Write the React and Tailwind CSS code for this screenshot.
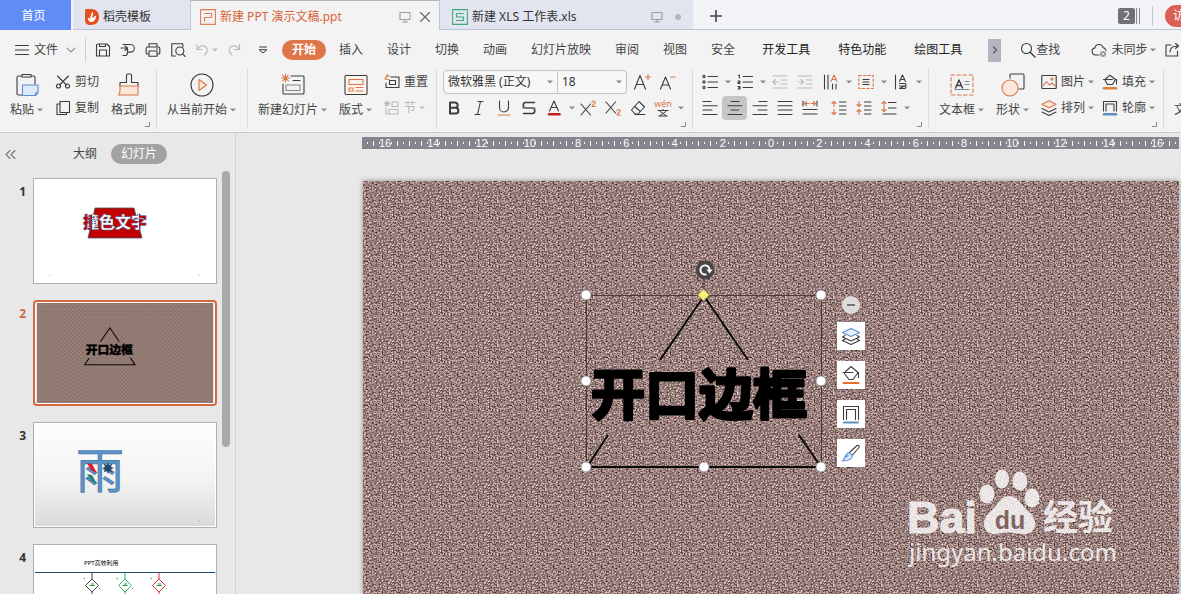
import React, { useState } from "react";
import clsx from "clsx";

const INK = "#3c3c3c";
const ORANGE = "#d9774a";
const BLUE = "#5b8fd6";
const FAINT = "#b9b9b9";

const MENU_TABS = ["插入", "设计", "切换", "动画", "幻灯片放映", "审阅", "视图", "安全"];
const TOOL_TABS = ["开发工具", "特色功能", "绘图工具"];

const TICK_COUNT = 135;

function Icon({ size = 16, color = INK, children }) {
  return (
    <svg
      width={size}
      height={size}
      viewBox={`0 0 ${size} ${size}`}
      fill="none"
      stroke={color}
      strokeWidth="1.1"
      strokeLinecap="round"
      strokeLinejoin="round"
      className="shrink-0"
      aria-hidden="true"
    >
      {children}
    </svg>
  );
}

function Caret({ faint }) {
  return (
    <svg width="6" height="4" viewBox="0 0 6 4" className="ml-[3px] shrink-0" aria-hidden="true">
      <path d="M0 0.5h6L3 3.6z" fill={faint ? "#c0c0c0" : "#8a8a8a"} />
    </svg>
  );
}

/* ---------- ribbon building blocks ---------- */

function Group({ launcher, className, children }) {
  return (
    <section className={clsx("relative flex h-[61px] shrink-0 border-r border-[#dcdcdc] pt-px", className)}>
      {children}
      {launcher && (
        <button type="button" aria-label="更多设置" className="absolute right-1.5 bottom-0.5">
          <svg width="5" height="5" viewBox="0 0 5 5" fill="none" stroke="#8a8a8a">
            <path d="M4.5 0v4.500h-4.500" />
          </svg>
        </button>
      )}
    </section>
  );
}

function BigButton({ label, caret, children }) {
  return (
    <button type="button" className="flex h-[52px] shrink-0 flex-col items-center">
      <span className="flex h-8 items-center">{children}</span>
      <span className="flex h-[18px] items-center leading-[18px] whitespace-nowrap">
        {label}
        {caret && <Caret />}
      </span>
    </button>
  );
}

function RowButton({ label, caret, disabled, children }) {
  return (
    <button
      type="button"
      disabled={disabled}
      className={clsx("flex h-[26px] items-center gap-1 whitespace-nowrap", disabled && "text-[#b5b5b5]")}
    >
      {children}
      <span className="flex items-center">
        {label}
        {caret && <Caret faint={disabled} />}
      </span>
    </button>
  );
}

function Tool({ label, caret, active, children }) {
  return (
    <button type="button" aria-label={label} className="flex h-[26px] shrink-0 items-center">
      <span className={clsx("flex h-6 w-[25px] items-center justify-center rounded", active && "bg-[#c6c6c6]")}>
        {children}
      </span>
      {caret && (
        <span className="flex w-[9px]">
          <Caret />
        </span>
      )}
    </button>
  );
}

function Picker({ id, label, value, className }) {
  return (
    <div className={clsx("relative h-6 border border-[#c4c4c4] bg-[#f7f7f7]", className)}>
      <label htmlFor={id} className="sr-only">{label}</label>
      <select id={id} className="h-full w-full appearance-none bg-transparent pl-1 text-xs text-[#333]">
        <option>{value}</option>
      </select>
      <span className="pointer-events-none absolute top-[9px] right-1">
        <Caret />
      </span>
    </div>
  );
}

/* ---------- top bars ---------- */

function Monitor() {
  return (
    <Icon size={12} color="#9b9b9b">
      <path d="M1 1.5h10v7H1zM6 8.500v2.500M3.500 11h5" />
    </Icon>
  );
}

function TabBar() {
  return (
    <header className="flex h-[30px] shrink-0 bg-[#f2f3f7]">
      <button type="button" className="mr-0.5 w-[71px] shrink-0 bg-[#608cf8] pt-0.5 pr-1 text-white">首页</button>
      <button
        type="button"
        className="flex w-[117px] shrink-0 items-center gap-1 border-b border-[#bcc6da] bg-[#e2e5ef] pt-1 pl-3 text-[#333]"
      >
        <svg width="14" height="16" viewBox="0 0 14 16" aria-hidden="true">
          <path d="M1 0h5c5 0 8 3 8 8s-3 8-8 8H5c-3 0-5-2-5-5V1z" fill="#e5501f" />
          <path d="M7.500 2.500c1.500 2.500 0 4-.5 6.500 1.500-.5 2.500-2 4-2.200C11 10 9.500 13 6.500 13S2.800 10.500 3 8.500c1 .2 1.500 1 2 1.800C5 7.500 6.500 5 7.500 2.500z" fill="#fff" />
        </svg>
        稻壳模板
      </button>
      <div className="flex w-[250px] shrink-0 items-center border-x border-t border-x-[#bcc6da] border-t-[#b5b5b9] bg-[#f3f3f3] pt-0.5 pr-2 pl-[9px]">
        <button type="button" className="flex flex-1 items-center gap-1 whitespace-nowrap text-[#d9643a]">
          <Icon color="#e07b52">
            <path d="M.6.6h14.800v14.800H.6zM4.500 4.500h7v4h-7v3.500" />
          </Icon>
          新建 PPT 演示文稿.ppt
        </button>
        <Monitor />
        <button type="button" aria-label="关闭" className="ml-2">
          <Icon size={12} color="#666">
            <path d="M1.500 1.500l9 9M10.500 1.500l-9 9" />
          </Icon>
        </button>
      </div>
      <div className="flex w-[253px] shrink-0 items-center border-b border-[#bcc6da] bg-[#e2e5ef] px-3 pt-1">
        <button type="button" className="flex flex-1 items-center gap-1 whitespace-nowrap text-[#333]">
          <Icon color="#3fab7c">
            <path d="M.6.6h14.800v14.800H.6zM11.500 4.500h-7v3.500h7v3.500h-7" />
          </Icon>
          新建 XLS 工作表.xls
        </button>
        <Monitor />
        <span className="ml-3 size-1.5 rounded-full bg-[#b3b5bd]" />
      </div>
      <div className="flex flex-1 items-center justify-between overflow-hidden border-b border-[#bcc6da] pt-0.5 pl-4">
        <button type="button" aria-label="新建标签">
          <svg width="14" height="14" viewBox="0 0 14 14" stroke="#444" strokeWidth="1.6">
            <path d="M7 1v12M1 7h12" />
          </svg>
        </button>
        <div className="flex shrink-0 items-center">
          <span className="flex h-4 w-[17px] items-center justify-center rounded-xs bg-[#707174] text-white">2</span>
          <span className="mr-3 ml-px h-4 w-1 border-x border-[#88898c]" />
          <span className="mr-3 h-5 w-px bg-[#c5c8d0]" />
          <button type="button" className="-mr-1 h-[22px] w-5 overflow-hidden rounded-l-full bg-[#dc5f55] pl-2 whitespace-nowrap text-white">
            访客
          </button>
        </div>
      </div>
    </header>
  );
}

function QuickButton({ label, caret, children }) {
  return (
    <button type="button" aria-label={label} className="flex h-6 items-center pl-[9px]">
      {children}
      {caret && <Caret faint />}
    </button>
  );
}

function MenuBar() {
  return (
    <nav className="flex h-[38px] shrink-0 items-center overflow-hidden bg-[#f3f3f3] pt-0.5 pr-px pl-3.5">
      <button type="button" className="flex w-[62px] shrink-0 items-center whitespace-nowrap">
        <Icon>
          <path d="M1.500 3.500h13M1.500 8h13M1.500 12.500h13" />
        </Icon>
        <span className="mr-2 ml-1">文件</span>
        <Icon size={10} color="#999">
          <path d="M1 3l4 4 4-4" />
        </Icon>
      </button>
      <span className="ml-[9px] h-6 w-px shrink-0 bg-[#cfcfcf]" />

      <div className="flex w-[196px] shrink-0 items-center">
        <QuickButton label="保存">
          <Icon>
            <path d="M1.500 3.500c0-1 .5-1.500 1.500-1.500h9l2.500 2.500V14h-13zM4.500 14V8h7v6M4.500 2v2.500h6V2" />
          </Icon>
        </QuickButton>
        <QuickButton label="输出为PDF">
          <Icon>
            <path d="M3 2.500h7.500a3.800 3.800 0 010 7.600H7.500V6M1 6h6.500M5 3.800L7.500 6 5 8.500M3 13.500h2.500c1.500 0 2-1 2-3.400" />
          </Icon>
        </QuickButton>
        <QuickButton label="打印">
          <Icon>
            <path d="M4 5V1.800h8V5M4 12H2.200C1.500 12 1.200 11.500 1.200 11V6.500C1.200 5.500 1.800 5 2.500 5h11c.8 0 1.300.5 1.300 1.500V11c0 .6-.4 1-1 1H12M4 9h8v5.200H4zM11.500 7h1" />
          </Icon>
        </QuickButton>
        <QuickButton label="打印预览">
          <Icon>
            <path d="M5.500 14H1.800V1.800h11V5M13 12.200l2.200 2.300" />
            <circle cx="9.800" cy="9" r="4" />
          </Icon>
        </QuickButton>
        <QuickButton label="撤销" caret>
          <Icon color={FAINT} size={14}>
            <path d="M2 1.500v5h5M2 6.500C4 3.500 6.500 2.500 9 3c4 1 4.500 6 .5 9" />
          </Icon>
        </QuickButton>
        <QuickButton label="恢复">
          <Icon color={FAINT} size={14}>
            <path d="M12.500 1.500v5h-5M12.500 6.500C10.500 3.500 8 2.500 5.500 3c-4 1-4.500 6-.5 9" />
          </Icon>
        </QuickButton>
        <span className="pl-2">
          <QuickButton label="自定义快速访问工具栏">
            <Icon size={10}>
              <path d="M1.500 2h7M1.500 5L5 8l3.500-3z" strokeWidth="1" />
            </Icon>
          </QuickButton>
        </span>
      </div>

      <button type="button" className="h-5 w-11 shrink-0 rounded-full bg-[#e0744a] font-bold text-white">开始</button>
      <div className="flex shrink-0 pl-px">
        {MENU_TABS.map((t) => (
          <button key={t} type="button" className="px-3 whitespace-nowrap">{t}</button>
        ))}
      </div>
      <div className="flex shrink-0 pl-px">
        {TOOL_TABS.map((t) => (
          <button key={t} type="button" className="px-3.5 whitespace-nowrap text-[#222]">{t}</button>
        ))}
      </div>
      <div className="flex flex-1 items-center justify-between pl-3">
        <button type="button" aria-label="更多选项卡" className="flex h-[23px] w-[13px] items-center justify-center bg-[#b3b5bf]">
          <Icon size={8} color="#555">
            <path d="M2.500 1l3 3-3 3" />
          </Icon>
        </button>
        <span className="w-1" />
        <button type="button" className="flex items-center whitespace-nowrap">
          <Icon>
            <circle cx="6.500" cy="6.500" r="5" />
            <path d="M10.200 10.200l4.800 4.800" strokeWidth="1.400" />
          </Icon>
          查找
        </button>
        <span className="w-4" />
        <button type="button" className="flex items-center gap-1 whitespace-nowrap">
          <Icon>
            <path d="M8 13H4.500a3.600 3.600 0 01-.6-7.100 4.200 4.200 0 018.200-.3A3.500 3.500 0 0115 8.500" />
            <circle cx="12" cy="12" r="3" fill="#999" stroke="none" />
            <path d="M11 11l2 2M13 11l-2 2" stroke="#fff" strokeWidth=".7" />
          </Icon>
          <span className="flex items-center">未同步<Caret /></span>
        </button>
        <button type="button" aria-label="分享">
          <Icon>
            <path d="M7 3H2v11h11.500V9M6 10c0-4 2.500-6 8-6M11.500 1.500L14.500 4l-3 2.500" />
          </Icon>
        </button>
      </div>
    </nav>
  );
}

/* ---------- ribbon ---------- */

function ClipboardGroup() {
  return (
    <Group launcher className="w-[157px] gap-3 px-2.5">
      <BigButton label="粘贴" caret>
        <Icon size={24}>
          <path d="M7 3H3.500C2.500 3 2 3.500 2 4.500v16c0 1 .5 1.500 1.500 1.500H7M16 3h2.500c1 0 1.500.5 1.500 1.500V11M7 1.500h9V4H7z" />
          <path d="M7.500 12h15.500v8l-2.500 2.500h-13zM23 20h-2.500v2.500" fill="#ddeafb" stroke={BLUE} />
        </Icon>
      </BigButton>
      <div>
        <RowButton label="剪切">
          <Icon>
            <path d="M2.500 2l9 9M13.500 2l-9 9" />
            <circle cx="3.500" cy="12" r="2" />
            <circle cx="12.500" cy="12" r="2" />
          </Icon>
        </RowButton>
        <RowButton label="复制">
          <Icon>
            <path d="M5 1.500h9.500v11H5zM5 4H2v10.500h9.500v-2" />
          </Icon>
        </RowButton>
      </div>
      <BigButton label="格式刷">
        <Icon size={24}>
          <path d="M3 13V9.500h6.500V2.500c0-1 .5-1.500 1.500-1.500h2c1 0 1.500.5 1.500 1.500v7H21V13" />
          <path d="M3 13h18v9H1.500C3 20.500 3 19 3 17z" fill="#fbe6da" stroke={ORANGE} />
        </Icon>
      </BigButton>
    </Group>
  );
}

function SlideGroup() {
  return (
    <>
      <Group className="w-[91px] px-2.5">
        <BigButton label="从当前开始" caret>
          <Icon size={24}>
            <circle cx="12" cy="12" r="11" />
            <path d="M9 6.500v11l7.500-5.500z" fill="#fbe6da" stroke={ORANGE} />
          </Icon>
        </BigButton>
      </Group>
      <Group className="w-[189px] gap-3 px-2.5">
        <BigButton label="新建幻灯片" caret>
          <Icon size={24}>
            <path d="M10 3h12c.6 0 1 .4 1 1v16c0 .6-.4 1-1 1H3c-.6 0-1-.4-1-1v-9M12 7.500h7" />
            <path d="M5 12h14v5.500H5z" stroke="#888" />
            <path d="M4.500 1v8M.5 5h8M1.700 2.200l5.600 5.600M7.300 2.200L1.700 7.800" stroke={ORANGE} />
          </Icon>
        </BigButton>
        <BigButton label="版式" caret>
          <Icon size={24}>
            <rect x="1" y="2.500" width="22" height="19" rx="1" fill="#fdf3ec" />
            <path d="M5 6.500h14v5H5zM5 15h4v3H5zM12 14.500h7M12 18h7" stroke={ORANGE} />
          </Icon>
        </BigButton>
        <div>
          <RowButton label="重置">
            <Icon>
              <path d="M7 3h8v10.500H2V9M5.500 6.500h6v4h-6z" />
              <path d="M1 5c.5-2 2-3 4.500-3M3.500.500L1 5l4.200.5" stroke={ORANGE} />
            </Icon>
          </RowButton>
          <RowButton label="节" caret disabled>
            <Icon color={FAINT}>
              <path d="M8 2h6v4.500H8zM5 9.500h9V14H5zM2 8v6h2M3 1v5M.5 3.500h5M1.200 1.700l3.600 3.600M4.800 1.700L1.200 5.300" />
            </Icon>
          </RowButton>
        </div>
      </Group>
    </>
  );
}

function FontGroup() {
  return (
    <Group launcher className="w-64 flex-col px-1">
      <div className="flex h-[26px] items-center pl-0.5">
        <Picker id="font-name" label="字体" value="微软雅黑 (正文)" className="w-[115px] rounded-l" />
        <Picker id="font-size" label="字号" value="18" className="w-[69px] rounded-r border-l-0" />
        <div className="flex pl-0.5">
          <Tool label="增大字号">
            <Icon size={18}>
              <path d="M1.500 16L7 2.500 12.500 16M3.500 11.500h7" />
              <path d="M12.500 4h5M15 1.500v5" stroke={ORANGE} />
            </Icon>
          </Tool>
          <Tool label="减小字号">
            <Icon size={18}>
              <path d="M2.500 16L7.500 4l5 12M4.200 12h6.600" />
              <path d="M12.500 4H17" stroke={ORANGE} />
            </Icon>
          </Tool>
        </div>
      </div>
      <div className="flex">
        <Tool label="加粗">
          <Icon>
            <path d="M4 2.500h5a2.600 2.600 0 010 5.300H4zM4 7.800h5.500a2.800 2.800 0 010 5.700H4z" strokeWidth="2" />
          </Icon>
        </Tool>
        <Tool label="倾斜">
          <Icon>
            <path d="M7 1.500h5M4 14.500h5M9.500 1.500l-3 13" />
          </Icon>
        </Tool>
        <Tool label="下划线">
          <Icon>
            <path d="M3.500 1v6.500a4.500 4.500 0 009 0V1" />
            <path d="M2 15h12" stroke={ORANGE} />
          </Icon>
        </Tool>
        <Tool label="删除线">
          <Icon>
            <path d="M13.500 2.500h-9c-3 0-3 5.500 0 5.500h7c3 0 3 5.500 0 5.500h-9" strokeWidth="1.600" />
            <path d="M1.500 8h13" stroke="#888" />
          </Icon>
        </Tool>
        <Tool label="字体颜色" caret>
          <Icon>
            <path d="M3.500 11L8 1l4.500 10M5 7.500h6" />
            <path d="M3 14.200h10.500" stroke="#c81e1e" strokeWidth="2.600" />
          </Icon>
        </Tool>
        <Tool label="上标">
          <Icon>
            <path d="M1 4l9.500 11M10.500 4L1 15" />
            <path d="M12 2.500c0-2 3.200-2 3.200 0 0 1.500-3.200 2-3.200 4h3.400" stroke={ORANGE} />
          </Icon>
        </Tool>
        <Tool label="下标">
          <Icon>
            <path d="M1 2l9.500 11M10.500 2L1 13" />
            <path d="M12 11c0-2 3.200-2 3.200 0 0 1.500-3.200 2-3.200 4h3.400" stroke={ORANGE} />
          </Icon>
        </Tool>
        <Tool label="清除格式">
          <Icon>
            <path d="M9 1.500l5.500 5.500L8 14H5L1.500 10zM4.800 6.500l5.500 5M5 14.500h10" />
          </Icon>
        </Tool>
        <Tool label="拼音指南" caret>
          <svg width="18" height="18" viewBox="0 0 18 18" aria-hidden="true">
            <text x="9" y="8" textAnchor="middle" fontSize="9" fill="#d9774a">wén</text>
            <path d="M3.500 11.500h11M9 10v1.500M5.500 12l7 5M12.500 12l-7 5M4.500 17h9" stroke={INK} fill="none" />
          </svg>
        </Tool>
      </div>
    </Group>
  );
}

function ParagraphGroup() {
  return (
    <Group launcher className="w-[236px] flex-col px-1">
      <div className="flex gap-px">
        <Tool label="项目符号" caret>
          <Icon>
            <path d="M6 2.500h9.500M6 8h9.500M6 13.500h9.500" />
            <circle cx="2" cy="2.500" r="1.100" />
            <circle cx="2" cy="8" r="1.100" />
            <circle cx="2" cy="13.500" r="1.100" />
          </Icon>
        </Tool>
        <Tool label="编号" caret>
          <Icon>
            <path d="M6 2.500h9.500M6 8h9.500M6 13.500h9.500M1.500 1.500l.8-.5v3M1 7h2v1.200H1v1.300h2M1 12.500h2v2.500H1M1.500 13.700H3" />
          </Icon>
        </Tool>
        <div className="flex">
          <Tool label="减少缩进">
            <Icon color={FAINT}>
              <path d="M1 2h14M9 6h6M9 10h6M1 14h14M1 8h5.500M3.500 5.500L1 8l2.500 2.500" />
            </Icon>
          </Tool>
          <Tool label="增加缩进">
            <Icon color={FAINT}>
              <path d="M1 2h14M9 6h6M9 10h6M1 14h14M1 8h5.500M4 5.500L6.500 8 4 10.500" />
            </Icon>
          </Tool>
        </div>
        <Tool label="文字方向" caret>
          <Icon>
            <path d="M1.500 1v14M5 1v14M9.500 10v5M13 10v5" />
            <path d="M8 7.500L11 1l3 6.500M9 5.500h4" stroke={ORANGE} />
          </Icon>
        </Tool>
        <Tool label="对齐文本" caret>
          <Icon>
            <rect x=".8" y="1.500" width="14.400" height="13" stroke={ORANGE} strokeDasharray="2.500 2" />
            <path d="M5 5.500h6M5 8h6M5 10.500h6" />
          </Icon>
        </Tool>
        <Tool label="旋转文字" caret>
          <Icon>
            <path d="M2.500 1v14M6.500 7.500L9.500 1l3 6.500M7.500 5.500h4M6.500 9.500h5c1 0 1.500.5 1.500 1.300s-.5 1.200-1.500 1.200h-5m5 0c1 0 1.500.5 1.500 1.300s-.5 1.200-1.500 1.200h-5z" />
          </Icon>
        </Tool>
      </div>
      <div className="flex gap-1">
        <div className="flex">
          <Tool label="左对齐">
            <Icon>
              <path d="M1 1.500h8M1 5.800h14M1 10h9M1 14.500h14" />
            </Icon>
          </Tool>
          <Tool label="居中对齐" active>
            <Icon>
              <path d="M4 1.500h8M1 5.800h14M4 10h8M1 14.500h14" />
            </Icon>
          </Tool>
          <Tool label="右对齐">
            <Icon>
              <path d="M7 1.500h8M1 5.800h14M6 10h9M1 14.500h14" />
            </Icon>
          </Tool>
          <Tool label="两端对齐">
            <Icon>
              <path d="M1 1.500h14M1 5.800h14M1 10h14M1 14.500h14" />
            </Icon>
          </Tool>
          <Tool label="分散对齐">
            <Icon>
              <path d="M1 1v5M15 1v5M1 9.500h14M1 14h14" />
              <path d="M3 3.500h4M9 3.500h4M4.500 1.500l-2 2 2 2M11.500 1.500l2 2-2 2" stroke={ORANGE} />
            </Icon>
          </Tool>
        </div>
        <div className="flex">
          <Tool label="增加段间距">
            <Icon>
              <path d="M8.500 2H15M8.500 6H15M8.500 10H15M8.500 14H15" />
              <path d="M3 6.500V1.500M1 3.500l2-2 2 2M3 9.500v5M1 12.500l2 2 2-2" stroke={ORANGE} />
            </Icon>
          </Tool>
          <Tool label="减少段间距">
            <Icon>
              <path d="M8.500 2H15M8.500 6H15M8.500 10H15M8.500 14H15" />
              <path d="M3 1.500v5M1 4.500l2 2 2-2M3 14.500v-5M1 11.500l2-2 2 2" stroke={ORANGE} />
            </Icon>
          </Tool>
          <Tool label="行距" caret>
            <Icon>
              <path d="M7.500 2.500H15M7.500 8H15M2 14h13" />
              <path d="M3 1.500v10M1 3.500l2-2 2 2M1 9.500l2 2 2-2" stroke={ORANGE} />
            </Icon>
          </Tool>
        </div>
      </div>
    </Group>
  );
}

function InsertGroup() {
  return (
    <Group launcher className="w-[235px] gap-3 px-2.5">
      <BigButton label="文本框" caret>
        <Icon size={24}>
          <rect x="1" y="2" width="22" height="20" stroke={ORANGE} strokeDasharray="3.500 2.500" />
          <path d="M5.500 15l3.500-8 3.500 8M6.800 12.500h4.500" strokeWidth="1.400" />
          <path d="M15 8.500h4M15 11.500h4M5 16.500h14" stroke="#7a8794" />
        </Icon>
      </BigButton>
      <BigButton label="形状" caret>
        <Icon size={24}>
          <path d="M9 5V2c0-.6.400-1 1-1h12c.6 0 1 .4 1 1v13c0 .6-.4 1-1 1h-4" />
          <circle cx="9" cy="15" r="8" fill="#fbe6da" stroke={ORANGE} />
        </Icon>
      </BigButton>
      <div className="flex gap-2">
        <div>
          <RowButton label="图片" caret>
            <Icon>
              <rect x=".8" y="1.500" width="14.400" height="13" rx=".5" />
              <path d="M2.500 11.500l3-4 3 3.500 2.500-2 3 3" stroke={ORANGE} />
              <circle cx="11" cy="5" r="1" stroke={ORANGE} />
            </Icon>
          </RowButton>
          <RowButton label="排列" caret>
            <Icon>
              <path d="M1 8.500L8 12l7-3.500M1 12l7 3.500 7-3.500" />
              <path d="M8 .800l7 3.500-7 3.500-7-3.500z" fill="#fbe6da" stroke={ORANGE} />
            </Icon>
          </RowButton>
        </div>
        <div>
          <RowButton label="填充" caret>
            <Icon>
              <path d="M1.500 5.500h9M3.500 5L8 1.200 13.500 5.500 10.500 10.500h-5L3 6M14.500 5.500v4.500" />
              <path d="M2 14.200h12" stroke="#e08238" strokeWidth="2.600" />
            </Icon>
          </RowButton>
          <RowButton label="轮廓" caret>
            <Icon>
              <path d="M1.500 11V1.500h13V11M4 11V4h8v7" />
              <path d="M2 14.200h12" stroke="#5f8fc0" strokeWidth="2.600" />
            </Icon>
          </RowButton>
        </div>
      </div>
    </Group>
  );
}

function Ribbon() {
  return (
    <div className="flex h-[65px] shrink-0 overflow-hidden border-b border-[#c9c9c9] bg-[#f3f3f3]">
      <ClipboardGroup />
      <SlideGroup />
      <FontGroup />
      <ParagraphGroup />
      <InsertGroup />
      <Group className="w-20 px-2.5">
        <BigButton label="文档助手" />
      </Group>
    </div>
  );
}

/* ---------- slide art ---------- */

function OpenTriangle() {
  return <path d="M45 66L89 2l44 64M-7 141l-21 32h234l-22-32" fill="none" stroke="#0a0a0a" />;
}

function ThumbOne() {
  return (
    <svg viewBox="0 0 180 102" className="h-full w-full bg-white">
      <defs>
        <linearGradient id="clash" x1="48" x2="113" y1="0" y2="0" gradientUnits="userSpaceOnUse">
          <stop offset=".14" stopColor="#c00000" />
          <stop offset=".14" stopColor="#fff" />
          <stop offset=".86" stopColor="#fff" />
          <stop offset=".86" stopColor="#c00000" />
        </linearGradient>
      </defs>
      <path d="M60 28h39l8 30H53z" fill="#c00000" stroke="#44546a" strokeWidth=".8" />
      <text x="80" y="48" textAnchor="middle" fontSize="16" fontWeight="900" fill="url(#clash)" stroke="#44649a" strokeWidth=".5">
        撞色文字
      </text>
      <circle cx="15" cy="95" r=".6" fill="#aaa" />
      <circle cx="164" cy="95" r=".6" fill="#888" />
    </svg>
  );
}

function ThumbTwo() {
  return (
    <svg viewBox="0 0 180 102" className="h-full w-full">
      <defs>
        <pattern id="weave" width="4" height="4" patternUnits="userSpaceOnUse">
          <rect width="4" height="4" fill="#957d76" />
          <path d="M0 0h2v1H0zM2 2h2v1H2z" fill="#836b65" />
          <path d="M0 2h1v1H0z" fill="#a48c86" />
        </pattern>
      </defs>
      <rect width="180" height="102" fill="url(#weave)" />
      <g transform="translate(55 25) scale(.22)" strokeWidth="5">
        <OpenTriangle />
      </g>
      <text x="74" y="52" textAnchor="middle" fontSize="12" fontWeight="900" stroke="#000" strokeWidth=".3">开口边框</text>
    </svg>
  );
}

function ThumbThree() {
  return (
    <svg viewBox="0 0 180 102" className="h-full w-full">
      <defs>
        <linearGradient id="fade" x1="0" x2="0" y1="0" y2="1">
          <stop offset=".1" stopColor="#fcfcfc" />
          <stop offset=".55" stopColor="#f3f3f3" />
          <stop offset="1" stopColor="#dadada" />
        </linearGradient>
      </defs>
      <rect width="180" height="102" fill="url(#fade)" />
      <text x="65" y="64" textAnchor="middle" fontSize="48" fill="#5b93c8" stroke="#41719c" strokeWidth=".6">雨</text>
      <path d="M52 39l5 1 5 9-6-3z" fill="#e01c2c" />
      <path d="M52 50l5 1 5 9-6-3z" fill="#2f8080" />
      <path d="M73 38l1.200 3 3-1.200L76 43l3 1-3 1.200 1.200 3-3-1.200L73 50l-1.200-3-3 1.200L70 45l-3-1 3-1-1.200-3.200 3 1.200z" fill="#24476e" />
      <circle cx="164" cy="97" r=".6" fill="#888" />
    </svg>
  );
}

function Pendant({ x, color }) {
  return (
    <g transform={`translate(${x} 27)`} fill="none" stroke={color}>
      <path d="M0 0v6M0 6l6.500 6.500L0 19l-6.500-6.500zM0 19v4" />
      <path d="M-2.500 12.500h5M-1 11h3" stroke="#2f9e44" />
      <path d="M-7 6l-1.500-1M7 15l1 1" stroke="#2f9e44" />
    </g>
  );
}

function ThumbFour() {
  return (
    <svg viewBox="0 0 180 102" className="h-full w-full bg-white">
      <text x="49" y="19" fontSize="6" fill="#000">PPT高效利用</text>
      <path d="M0 26.500h180" stroke="#1f4e79" />
      <Pendant x={57} color="#444" />
      <Pendant x={90} color="#2bb673" />
      <Pendant x={124} color="#e0313f" />
    </svg>
  );
}

const THUMBS = [ThumbOne, ThumbTwo, ThumbThree, ThumbFour];

function SlidePanel() {
  const [current, setCurrent] = useState(1);

  return (
    <aside className="flex w-[236px] shrink-0 flex-col border-r border-[#d3d3d3] bg-[#e8e8e8]">
      <div className="flex h-[38px] shrink-0 items-center pt-1 pl-1">
        <button type="button" aria-label="收起" className="mr-14">
          <Icon size={13} color="#777">
            <path d="M6 2.500L2 6.500l4 4M11 2.500l-4 4 4 4" />
          </Icon>
        </button>
        <button type="button">大纲</button>
        <button type="button" className="ml-3.5 h-5 w-14 rounded-full bg-[#a2a2a2] text-white">幻灯片</button>
      </div>
      <div className="flex min-h-0 flex-1 pr-[5px]">
        <ol className="flex min-w-0 flex-1 flex-col gap-4 overflow-hidden pt-[7px]">
          {THUMBS.map((Thumb, i) => (
            <li key={i} className="flex shrink-0">
              <span
                className={clsx(
                  "w-[33px] pt-1.5 pr-[7px] text-right font-['Noto_Sans'] font-bold",
                  i === current ? "text-[#d1693a]" : "text-[#333]"
                )}
              >
                {i + 1}
              </span>
              <button
                type="button"
                aria-label={`幻灯片 ${i + 1}`}
                onClick={() => setCurrent(i)}
                className={clsx(
                  "h-[106px] w-[184px] bg-white",
                  i === current ? "rounded-sm border-2 border-[#d1693a] p-px" : "border border-[#b0b0b0] p-px"
                )}
              >
                <Thumb />
              </button>
            </li>
          ))}
        </ol>
        <div className="h-[276px] w-2 shrink-0 rounded-full bg-[#a9a9a9]" />
      </div>
    </aside>
  );
}

/* ---------- canvas ---------- */

function Ruler() {
  return (
    <div className="flex h-3 shrink-0 items-center bg-[#85858d] pl-0.5 font-['Liberation_Sans'] text-[11px] leading-3 text-white">
      {Array.from({ length: TICK_COUNT }, (_, i) => {
        const step = i - 3;
        return (
          <span key={i} className="flex min-w-0 flex-1 justify-center">
            {step % 8 === 0 ? (
              <span>{Math.abs(16 - step / 4)}</span>
            ) : (
              <span className={clsx("w-px shrink-0 bg-white", step % 2 === 0 ? "h-[5px]" : "h-0.5")} />
            )}
          </span>
        );
      })}
    </div>
  );
}

function Texture() {
  return (
    <svg className="absolute inset-0 h-full w-full" aria-hidden="true">
      <defs>
        <filter id="grain" x="0" y="0" width="100%" height="100%" colorInterpolationFilters="sRGB">
          <feTurbulence type="fractalNoise" baseFrequency=".62" numOctaves="4" seed="11" stitchTiles="stitch" />
          <feColorMatrix
            values="1.1 .25 0 0 -.07
                    1.1 .05 .1 0 -.12
                    1.05 0 .3 0 -.18
                    0 0 0 0 1"
          />
        </filter>
        <pattern id="stone" width="48" height="48" patternUnits="userSpaceOnUse">
          <rect width="48" height="48" filter="url(#grain)" />
          <path d="M3 8l9 12 6-4 4 14M26 4l8 10-5 9 11 8M10 34l9 8M34 36l8-7" stroke="#5c4640" strokeOpacity=".4" fill="none" />
        </pattern>
      </defs>
      <rect width="100%" height="100%" fill="url(#stone)" />
    </svg>
  );
}

const HANDLES = [[7, 26], [242, 26], [7, 112], [242, 112], [7, 198], [125, 198], [242, 198]];

function SelectedShape() {
  return (
    <svg width="250" height="220" className="absolute top-[88px] left-[216px]">
      <rect x="7.500" y="26.500" width="235" height="172" fill="none" stroke="#4a3c38" />
      <g transform="translate(36 25)" strokeWidth="2">
        <OpenTriangle />
      </g>
      <text
        x="120"
        y="146"
        textAnchor="middle"
        fontSize="54"
        fontWeight="700"
        stroke="#000"
        strokeWidth="3"
        strokeLinejoin="round"
        strokeLinecap="round"
      >
        开口边框
      </text>
      <path d="M125 8v14" stroke="#4a3c38" />
      {HANDLES.map(([x, y]) => (
        <circle key={`${x}-${y}`} cx={x} cy={y} r="5" fill="#fff" stroke="#8b8b8b" strokeWidth=".8" />
      ))}
      <path d="M124.500 20l6 6-6 6-6-6z" fill="#f7f27a" stroke="#77733c" strokeWidth=".8" />
    </svg>
  );
}

function RotateHandle() {
  return (
    <button type="button" aria-label="旋转" className="absolute top-[79px] left-[332px] size-5">
      <svg width="20" height="20" viewBox="0 0 20 20" fill="none">
        <circle cx="10" cy="10" r="9.500" fill="#4a4646" />
        <path d="M11.500 14.300A4.600 4.600 0 1114.600 10" stroke="#fff" strokeWidth="1.900" />
        <path d="M11.500 9.500h6l-3 4z" fill="#fff" />
      </svg>
    </button>
  );
}

function FloatButton({ label, children }) {
  return (
    <button type="button" aria-label={label} className="flex size-7 items-center justify-center bg-white shadow">
      <Icon size={20}>{children}</Icon>
    </button>
  );
}

function FloatingTools() {
  return (
    <div className="absolute top-[115px] left-[474px] flex flex-col items-center gap-[11px]">
      <button type="button" aria-label="收起工具" className="-mb-[3px] flex size-[18px] items-center justify-center rounded-full bg-[#dedbda] shadow">
        <span className="h-0.5 w-2 bg-[#777]" />
      </button>
      <FloatButton label="图层">
        <path d="M4 9.500L1.500 11l8.500 4 8.500-4-2.500-1.500M4 13l-2.500 1.500 8.500 4 8.500-4L16 13" />
        <path d="M10 2.500l8.500 4L10 10.500l-8.500-4z" fill="#e6f1fc" stroke={BLUE} />
      </FloatButton>
      <FloatButton label="填充">
        <path d="M2 7.500h10M4.500 6.500L10 1.500l7 6-5 7H8l-4.500-6M17.500 7.500v5" />
        <path d="M2.500 18h15" stroke="#e8702a" strokeWidth="2" />
      </FloatButton>
      <FloatButton label="轮廓">
        <path d="M2.500 15.500v-13h15v13M5.500 15.500v-10h9v10" />
        <path d="M3 18.500h14" stroke="#5f8fc0" strokeWidth="1.800" />
      </FloatButton>
      <FloatButton label="格式刷">
        <path d="M8.500 9.500L16 2.500c1.500-.8 2.800.5 2 2L11.500 12" />
        <path d="M8 9.500l3.500 3c-.5 3.500-4 5.500-10 5.500 2.500-1.500 2-7 6.500-8.500zM5 14l2-1.500" fill="#dbeafa" stroke={BLUE} />
      </FloatButton>
    </div>
  );
}

function Watermark() {
  return (
    <svg width="216" height="110" className="absolute right-[60px] bottom-4 opacity-80" fill="#fff">
      <text x="4" y="65" fontFamily="Liberation Sans" fontSize="45" fontWeight="700" stroke="#fff">Bai</text>
      <ellipse cx="84" cy="26" rx="7.500" ry="9.500" />
      <ellipse cx="99" cy="11" rx="7" ry="9.500" />
      <ellipse cx="117" cy="13" rx="7.500" ry="9.500" />
      <ellipse cx="129" cy="30" rx="7.500" ry="9.500" />
      <path d="M106 28c9 0 12 9 18 14s9 10 8 15c-1 7-7 10-13 9-9-2-17-2-26 0-6 1-12-3-12-10 0-9 6-11 11-17 4-5 7-11 14-11z" />
      <text x="107" y="61" textAnchor="middle" fontFamily="Liberation Sans" fontSize="25" fontWeight="700" fill="#7a5f59">du</text>
      <text x="140" y="62" fontSize="35" fontWeight="700">经验</text>
      <text x="6" y="93" fontFamily="Noto Sans" fontSize="24">jingyan.baidu.com</text>
    </svg>
  );
}

function Canvas() {
  return (
    <main className="flex min-w-0 flex-1 flex-col bg-[#e8e8e8] pt-1 pr-0.5 pl-[126px]">
      <Ruler />
      <div className="relative mt-8 ml-px min-h-0 flex-1 bg-[#967c76] shadow-[0_0_5px_#8a8a8a]">
        <Texture />
        <SelectedShape />
        <RotateHandle />
        <FloatingTools />
        <Watermark />
      </div>
    </main>
  );
}

export default function App() {
  return (
    <div className="flex h-screen flex-col overflow-hidden bg-[#e8e8e8] font-['Noto_Sans','Noto_Sans_CJK_SC',sans-serif] text-xs text-[#444]">
      <TabBar />
      <MenuBar />
      <Ribbon />
      <div className="flex min-h-0 flex-1">
        <SlidePanel />
        <Canvas />
      </div>
    </div>
  );
}
